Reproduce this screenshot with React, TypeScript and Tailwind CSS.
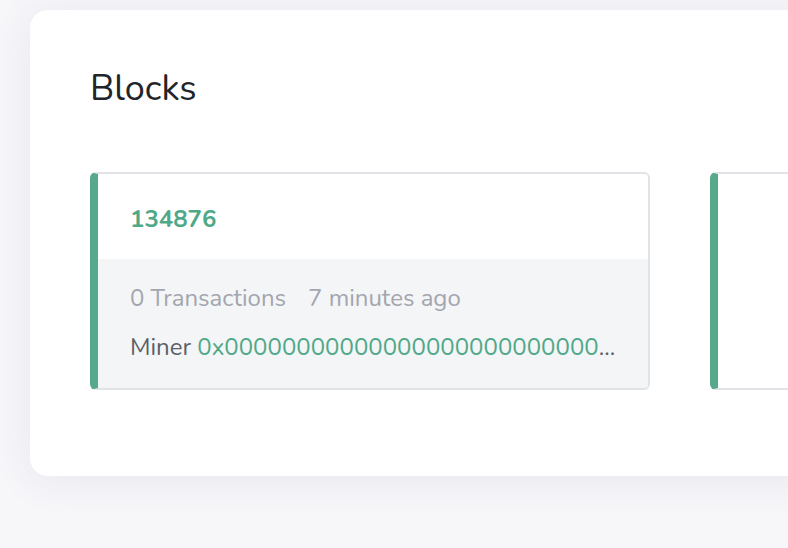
import React from "react";

const blocks = [
  { number: "134876", txs: 0, age: "7 minutes ago", miner: "0x0000000000000000000000000000000000000000" },
];

export default function App() {
  return (
    <div className="h-[548px] w-[788px] overflow-hidden bg-[#f7f7fa] pt-[10px] pl-[30px] font-['Nunito','Noto_Sans',sans-serif]">
      {/* --- BLOCKS PANEL --- */}
      <div className="w-[900px] h-[466px] rounded-[18px] bg-white shadow-[0_4px_40px_rgba(60,60,110,0.09)] px-[60px] pt-[57px]">
        <h1 className="text-[36px] leading-[44px] text-[#212529]">Blocks</h1>

        <div className="mt-[61px] flex gap-[60px]">
          {blocks.map((b) => (
            <div
              key={b.number}
              className="w-[560px] shrink-0 overflow-hidden rounded-[6px] border-2 border-l-[8px] border-[#e1e3e7] border-l-[#56a98b]"
            >
              <div className="bg-white px-[32px] pt-[29px] pb-[24px]">
                <span className="block text-[24px] leading-[32px] font-bold text-[#4fa887]">{b.number}</span>
              </div>
              <div className="bg-[#f4f5f7] px-[32px] pt-[23px] pb-[25px] flex flex-col gap-[17px] text-[24px] leading-[32px]">
                <div className="flex gap-[22px] text-[#a3a6ae]">
                  <span>{b.txs} Transactions</span>
                  <span>{b.age}</span>
                </div>
                <div className="truncate text-[#5b5f67]">
                  Miner <span className="text-[#4fa887]">{b.miner}</span>
                </div>
              </div>
            </div>
          ))}
          {/* next card, still loading */}
          <div className="w-[560px] h-[218px] shrink-0 rounded-[6px] border-2 border-l-[8px] border-[#e1e3e7] border-l-[#56a98b] bg-white" />
        </div>
      </div>
    </div>
  );
}
